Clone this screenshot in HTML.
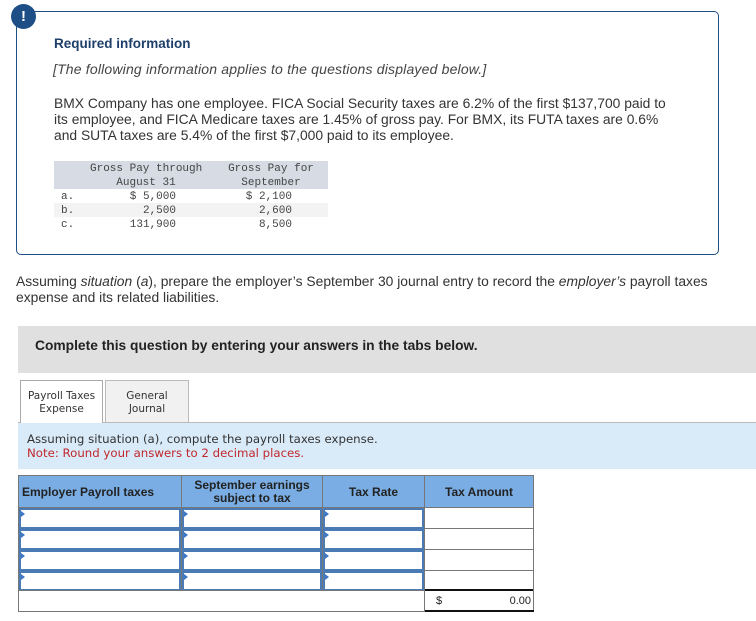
<!DOCTYPE html>
<html><head><style>
*{margin:0;padding:0;box-sizing:border-box}
body{width:756px;height:621px;background:#fff;position:relative;overflow:hidden;font-family:"Liberation Sans",sans-serif;color:#333}
.a{position:absolute;white-space:nowrap}
.box{position:absolute;left:16px;top:11px;width:703px;height:244px;border:1px solid #1d4f86;border-radius:5px}
.badge{position:absolute;left:11px;top:4px;width:25px;height:25px;border-radius:50%;background:#1d4f86;color:#fff;font-weight:bold;font-size:15px;text-align:center;line-height:25px}
.t13{font-size:14px;color:#333}
.mono{font-family:"Liberation Mono",monospace;font-size:11px;color:#444}
.inp{position:absolute;border:2px solid #4a7bb5;background:#fff}
.inp:before{content:"";position:absolute;left:0;top:1px;border-left:4px solid #3c78c8;border-top:3px solid transparent;border-bottom:3px solid transparent}
.v{font-family:"DejaVu Sans",sans-serif}
</style></head><body>
<div class="box"></div>
<div class="badge">!</div>
<div class="a" style="left:54px;top:36px;font-size:13.5px;font-weight:bold;color:#1d3f6a">Required information</div>
<div class="a t13" style="left:53px;top:61px;font-style:italic;color:#444;letter-spacing:0.18px">[The following information applies to the questions displayed below.]</div>
<div class="a t13" style="left:54px;top:95px;line-height:16px;font-size:13.85px">BMX Company has one employee. FICA Social Security taxes are 6.2% of the first $137,700 paid to<br>its employee, and FICA Medicare taxes are 1.45% of gross pay. For BMX, its FUTA taxes are 0.6%<br>and SUTA taxes are 5.4% of the first $7,000 paid to its employee.</div>
<div class="a" style="left:54px;top:161px;width:274px;height:28px;background:#d6dbe4"></div>
<div class="a" style="left:54px;top:203px;width:274px;height:14px;background:#f3f3f3"></div>
<div class="a mono" style="left:90px;top:162px;line-height:14px;text-align:center;width:112px">Gross Pay through<br>August 31</div>
<div class="a mono" style="left:224px;top:162px;line-height:14px;text-align:center;width:94px">Gross Pay for<br>September</div>
<div class="a mono" style="left:61px;top:190px;line-height:14px">a.<br>b.<br>c.</div>
<div class="a mono" style="left:116px;top:190px;line-height:14px;text-align:right;width:60px">$ 5,000<br>2,500<br>131,900</div>
<div class="a mono" style="left:236px;top:190px;line-height:14px;text-align:right;width:56px">$ 2,100<br>2,600<br>8,500</div>
<div class="a t13" style="left:16px;top:273px;line-height:16px;font-size:13.85px">Assuming <i>situation</i> (<i>a</i>), prepare the employer’s September 30 journal entry to record the <i>employer’s</i> payroll taxes<br>expense and its related liabilities.</div>
<div class="a" style="left:18px;top:326px;width:738px;height:47px;background:#e0e0e0"></div>
<div class="a" style="left:35px;top:338px;font-size:13.8px;font-weight:bold;color:#222">Complete this question by entering your answers in the tabs below.</div>
<div class="a" style="left:18px;top:422px;width:738px;height:1px;background:#bbb"></div>
<div class="a v" style="left:20px;top:380px;width:83px;height:44px;border:1px solid #aaa;border-bottom:none;background:#fff;font-size:10.5px;text-align:center;line-height:13px;padding-top:9px">Payroll Taxes<br>Expense</div>
<div class="a v" style="left:105px;top:380px;width:84px;height:42px;border:1px solid #bbb;border-bottom:none;background:#f1f1f1;font-size:10.5px;text-align:center;line-height:13px;padding-top:9px">General<br>Journal</div>
<div class="a" style="left:18px;top:423px;width:738px;height:46px;background:#d9eaf8"></div>
<div class="a v" style="left:27px;top:432px;font-size:11.75px;line-height:14px;color:#333">Assuming situation (a), compute the payroll taxes expense.<br><span style="color:#c0282d">Note: Round your answers to 2 decimal places.</span></div>
<div class="a" style="left:18px;top:475px;width:516px;height:137px;border:1px solid #777"></div>
<div class="a" style="left:19px;top:476px;width:514px;height:32px;background:#79ade3"></div>
<div class="a" style="left:181px;top:476px;width:1px;height:114px;background:#777"></div>
<div class="a" style="left:322px;top:476px;width:1px;height:114px;background:#777"></div>
<div class="a" style="left:424px;top:476px;width:1px;height:136px;background:#777"></div>
<div class="a" style="left:19px;top:507px;width:514px;height:1px;background:#777"></div>
<div class="a" style="left:22px;top:485px;font-size:12px;font-weight:bold;color:#222">Employer Payroll taxes</div>
<div class="a" style="left:182px;top:479px;width:140px;font-size:12px;font-weight:bold;color:#222;text-align:center;line-height:13px">September earnings<br>subject to tax</div>
<div class="a" style="left:323px;top:485px;width:101px;font-size:12px;font-weight:bold;color:#222;text-align:center">Tax Rate</div>
<div class="a" style="left:425px;top:485px;width:108px;font-size:12px;font-weight:bold;color:#222;text-align:center">Tax Amount</div>
<div class="inp" style="left:19px;top:508px;width:162px;height:21px"></div>
<div class="inp" style="left:182px;top:508px;width:140px;height:21px"></div>
<div class="inp" style="left:323px;top:508px;width:101px;height:21px"></div>
<div class="inp" style="left:19px;top:529px;width:162px;height:21px"></div>
<div class="inp" style="left:182px;top:529px;width:140px;height:21px"></div>
<div class="inp" style="left:323px;top:529px;width:101px;height:21px"></div>
<div class="inp" style="left:19px;top:550px;width:162px;height:21px"></div>
<div class="inp" style="left:182px;top:550px;width:140px;height:21px"></div>
<div class="inp" style="left:323px;top:550px;width:101px;height:21px"></div>
<div class="inp" style="left:19px;top:571px;width:162px;height:20px"></div>
<div class="inp" style="left:182px;top:571px;width:140px;height:20px"></div>
<div class="inp" style="left:323px;top:571px;width:101px;height:20px"></div>
<div class="a" style="left:425px;top:528px;width:108px;height:1px;background:#777"></div>
<div class="a" style="left:425px;top:549px;width:108px;height:1px;background:#777"></div>
<div class="a" style="left:425px;top:570px;width:108px;height:1px;background:#777"></div>
<div class="a" style="left:19px;top:590px;width:405px;height:1px;background:#777"></div>
<div class="a" style="left:425px;top:589px;width:108px;height:2px;background:#111"></div>
<div class="a" style="left:425px;top:610px;width:109px;height:2px;background:#111"></div>
<div class="a" style="left:436px;top:595px;font-size:11px;color:#222">$</div>
<div class="a" style="left:470px;top:595px;width:61px;text-align:right;font-size:11px;color:#222">0.00</div>
</body></html>
